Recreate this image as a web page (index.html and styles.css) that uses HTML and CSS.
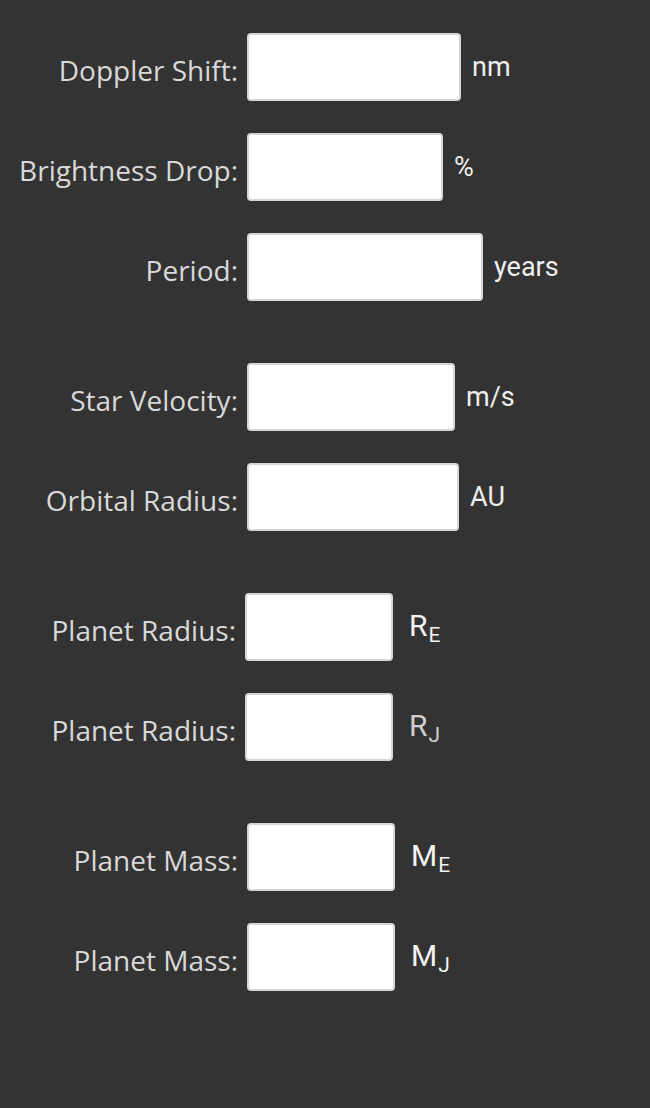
FILE: index.html
```html
<!DOCTYPE html>
<html>
<head>
<meta charset="utf-8">
<link rel="stylesheet" href="styles.css">
</head>
<body>
<div class="form">
  <div class="group">
    <div class="row"><label class="lbl">Doppler Shift:</label><input class="box w214" type="text"><span class="unit">nm</span></div>
    <div class="row"><label class="lbl">Brightness Drop:</label><input class="box w196" type="text"><span class="unit">%</span></div>
    <div class="row"><label class="lbl">Period:</label><input class="box w236" type="text"><span class="unit">years</span></div>
  </div>
  <div class="group">
    <div class="row"><label class="lbl">Star Velocity:</label><input class="box w208" type="text"><span class="unit">m/s</span></div>
    <div class="row"><label class="lbl">Orbital Radius:</label><input class="box w212" type="text"><span class="unit">AU</span></div>
  </div>
  <div class="group">
    <div class="row"><label class="lbl narrow">Planet Radius:</label><input class="box w148" type="text"><span class="unit big">R<sub>E</sub></span></div>
    <div class="row"><label class="lbl narrow">Planet Radius:</label><input class="box w148" type="text"><span class="unit big dim">R<sub>J</sub></span></div>
  </div>
  <div class="group">
    <div class="row"><label class="lbl">Planet Mass:</label><input class="box w148" type="text"><span class="unit big">M<sub>E</sub></span></div>
    <div class="row"><label class="lbl">Planet Mass:</label><input class="box w148" type="text"><span class="unit big">M<sub>J</sub></span></div>
  </div>
</div>
</body>
</html>
```
FILE: styles.css
```css
html, body {
  margin: 0;
  padding: 0;
  background: #333333;
  height: 100%;
}
.form {
  padding-top: 33px;
  display: flex;
  flex-direction: column;
}
.group {
  display: flex;
  flex-direction: column;
  margin-bottom: 30px;
}
.row {
  display: flex;
  align-items: flex-start;
  height: 100px;
}
.lbl {
  flex: none;
  width: 247px;
  box-sizing: border-box;
  padding-right: 9px;
  padding-top: 3px;
  text-align: right;
  font-family: "Open Sans", sans-serif;
  font-size: 28px;
  line-height: 68px;
  color: #d9d9d9;
  white-space: nowrap;
}
.lbl.narrow {
  width: 245px;
}
.box {
  box-sizing: border-box;
  height: 68px;
  margin: 0;
  border: 2px solid #d6d6da;
  border-radius: 4px;
  background: #ffffff;
  padding: 0 8px;
  flex: none;
  outline: none;
}
.w214 { width: 214px; }
.w196 { width: 196px; }
.w236 { width: 236px; }
.w208 { width: 208px; }
.w212 { width: 212px; }
.w148 { width: 148px; }
.unit {
  font-family: Roboto, sans-serif;
  font-size: 27px;
  line-height: 68px;
  color: #eeeeee;
  margin-left: 11px;
}
.unit.big {
  font-size: 30px;
  margin-left: 16px;
  color: #f4f4f4;
  margin-top: -1px;
}
.unit.dim {
  color: #cfcfcf;
}
.unit sub {
  font-size: 21px;
  vertical-align: baseline;
  position: relative;
  top: 6px;
  line-height: 0;
  margin-left: 1px;
}
```
